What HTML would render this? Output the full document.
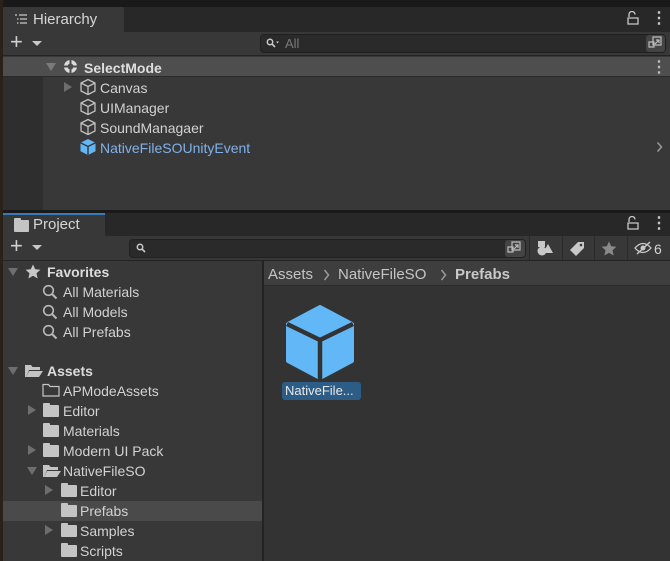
<!DOCTYPE html>
<html><head><meta charset="utf-8"><style>
*{margin:0;padding:0;box-sizing:border-box}
body{width:670px;height:561px;background:#191919;position:relative;overflow:hidden;font-family:"Liberation Sans",sans-serif;font-size:14px;color:#d2d2d2}
.a{position:absolute}
.t{position:absolute;white-space:nowrap;line-height:20px}
.tri{position:absolute;width:0;height:0}
.rt{border-top:5px solid transparent;border-bottom:5px solid transparent;border-left:8px solid #6e6e6e}
.dn{border-left:5px solid transparent;border-right:5px solid transparent;border-top:8px solid #6e6e6e}
.fold{position:absolute;width:16px;height:12px;background:#c4c4c4;border-radius:1px}
.fold:before{content:"";position:absolute;left:0;top:-2px;width:7px;height:3px;background:#c4c4c4;border-radius:1px 1px 0 0}
</style></head><body>
<div class="a" style="left:0;top:0;width:3px;height:561px;background:#2a2218"></div>
<div class="a" style="left:3px;top:7px;width:667px;height:25px;background:#282828"></div>
<div class="a" style="left:3px;top:7px;width:121px;height:25px;background:#383838;border-radius:2px 2px 0 0"></div>
<svg class="a" style="left:14px;top:13px" width="14" height="12"><g stroke="#c4c4c4" stroke-width="1.3"><line x1="1" y1="2" x2="3" y2="2"/><line x1="5" y1="2" x2="13" y2="2"/><line x1="3" y1="6" x2="4.5" y2="6"/><line x1="6" y1="6" x2="13" y2="6"/><line x1="3" y1="10" x2="4.5" y2="10"/><line x1="6" y1="10" x2="13" y2="10"/></g></svg>
<div class="t" style="left:33px;top:10px;font-size:15px;color:#d6d6d6">Hierarchy</div>
<svg class="a" style="left:626px;top:11px" width="14" height="14"><path d="M3 6V3.5a3 3 0 0 1 6 0M2 7h10v6H2z" fill="none" stroke="#c8c8c8" stroke-width="1.3"/></svg>
<div class="t" style="left:651px;top:9px;font-size:16px;font-weight:bold;color:#c8c8c8">⋮</div>
<div class="a" style="left:3px;top:32px;width:667px;height:24px;background:#383838;border-bottom:1px solid #232323"></div>
<div class="t" style="left:10px;top:32px;font-size:22px;color:#d0d0d0">+</div>
<div class="tri dn" style="left:32px;top:41px;border-top-color:#c8c8c8;border-width:5px 5px 0 5px"></div>
<div class="a" style="left:260px;top:34px;width:406px;height:19px;background:#2a2a2a;border:1px solid #202020;border-radius:4px"></div>
<svg class="a" style="left:266px;top:38px" width="14" height="10"><circle cx="4" cy="4" r="2.7" fill="none" stroke="#c8c8c8" stroke-width="1.5"/><path d="M6 6l3 3" stroke="#c8c8c8" stroke-width="1.6"/><path d="M10 3.5h3l-1.5 2z" fill="#c8c8c8"/></svg>
<div class="t" style="left:285px;top:34px;font-size:13px;color:#7a7a7a">All</div>
<div class="a" style="left:646px;top:35px;width:19px;height:17px;background:#444;border-radius:3px"></div>
<svg class="a" style="left:648px;top:36px" width="15" height="15"><path d="M5 1h8v8H5zM1 6h5v5H1z" fill="none" stroke="#bcbcbc" stroke-width="1.2"/><path d="M7 8l4-4M8 4h3v3" fill="none" stroke="#bcbcbc" stroke-width="1.2"/></svg>
<div class="a" style="left:3px;top:56px;width:667px;height:154px;background:#383838"></div>
<div class="a" style="left:3px;top:76px;width:40px;height:134px;background:#2e2e2e"></div>
<div class="a" style="left:3px;top:57px;width:667px;height:20px;background:#4e4e4e;border-bottom:1px solid #2a2a2a"></div>
<div class="tri dn" style="left:46px;top:63px;border-top-color:#7a7a7a"></div>
<svg class="a" style="left:62px;top:58px" width="17" height="17"><circle cx="8.5" cy="8.5" r="6.5" fill="#dcdcdc"/><path d="M8.5 2v13M2 8.5h13" stroke="#4e4e4e" stroke-width="2"/><circle cx="8.5" cy="8.5" r="3" fill="#4e4e4e"/></svg>
<div class="t" style="left:84px;top:58px;font-weight:bold;color:#dedede">SelectMode</div>
<div class="a" style="left:651px;top:57px;font-size:16px;font-weight:bold;color:#bbb">⋮</div>
<div class="tri rt" style="left:64px;top:82px"></div>
<svg class="a" style="left:79px;top:78px" width="18" height="18"><path d="M9 1.5l7 3.5v8l-7 3.5-7-3.5v-8zM2 5l7 3.5 7-3.5M9 8.5v8" fill="none" stroke="#c0c0c0" stroke-width="1.3" stroke-linejoin="round"/></svg>
<div class="t" style="left:100px;top:78px">Canvas</div>
<svg class="a" style="left:79px;top:98px" width="18" height="18"><path d="M9 1.5l7 3.5v8l-7 3.5-7-3.5v-8zM2 5l7 3.5 7-3.5M9 8.5v8" fill="none" stroke="#c0c0c0" stroke-width="1.3" stroke-linejoin="round"/></svg>
<div class="t" style="left:100px;top:98px">UIManager</div>
<svg class="a" style="left:79px;top:118px" width="18" height="18"><path d="M9 1.5l7 3.5v8l-7 3.5-7-3.5v-8zM2 5l7 3.5 7-3.5M9 8.5v8" fill="none" stroke="#c0c0c0" stroke-width="1.3" stroke-linejoin="round"/></svg>
<div class="t" style="left:100px;top:118px">SoundManagaer</div>
<svg class="a" style="left:79px;top:138px" width="18" height="18"><path d="M9 1l7.5 3.7v8.6L9 17l-7.5-3.7V4.7z" fill="#62b8f6"/><path d="M1.5 4.7L9 8.5l7.5-3.8M9 8.5V17" fill="none" stroke="#383838" stroke-width="1.4"/></svg>
<div class="t" style="left:100px;top:138px;color:#7fb2ea">NativeFileSOUnityEvent</div>
<svg class="a" style="left:656px;top:141px" width="8" height="12"><path d="M1.5 1.5l4 4.5-4 4.5" fill="none" stroke="#9a9a9a" stroke-width="1.5"/></svg>
<div class="a" style="left:3px;top:213px;width:667px;height:23px;background:#282828"></div>
<div class="a" style="left:3px;top:213px;width:102px;height:23px;background:#383838;border-top:2px solid #3a79bb"></div>
<div class="fold" style="left:14px;top:220px;width:15px"></div>
<div class="t" style="left:33px;top:215px;font-size:15px;color:#d6d6d6">Project</div>
<svg class="a" style="left:626px;top:216px" width="14" height="14"><path d="M3 6V3.5a3 3 0 0 1 6 0M2 7h10v6H2z" fill="none" stroke="#c8c8c8" stroke-width="1.3"/></svg>
<div class="t" style="left:651px;top:214px;font-size:16px;font-weight:bold;color:#c8c8c8">⋮</div>
<div class="a" style="left:3px;top:236px;width:667px;height:25px;background:#383838;border-bottom:1px solid #232323"></div>
<div class="t" style="left:10px;top:236px;font-size:22px;color:#d0d0d0">+</div>
<div class="tri dn" style="left:32px;top:245px;border-top-color:#c8c8c8;border-width:5px 5px 0 5px"></div>
<div class="a" style="left:129px;top:239px;width:397px;height:19px;background:#2a2a2a;border:1px solid #202020;border-radius:4px"></div>
<svg class="a" style="left:136px;top:243px" width="10" height="10"><circle cx="4" cy="4" r="2.7" fill="none" stroke="#c8c8c8" stroke-width="1.5"/><path d="M6 6l3 3" stroke="#c8c8c8" stroke-width="1.6"/></svg>
<div class="a" style="left:505px;top:240px;width:20px;height:17px;background:#444;border-radius:3px"></div>
<svg class="a" style="left:507px;top:241px" width="15" height="15"><path d="M5 1h8v8H5zM1 6h5v5H1z" fill="none" stroke="#bcbcbc" stroke-width="1.2"/><path d="M7 8l4-4M8 4h3v3" fill="none" stroke="#bcbcbc" stroke-width="1.2"/></svg>
<div class="a" style="left:529px;top:236px;width:1px;height:24px;background:#2a2a2a"></div>
<div class="a" style="left:562px;top:236px;width:1px;height:24px;background:#2a2a2a"></div>
<div class="a" style="left:594px;top:236px;width:1px;height:24px;background:#2a2a2a"></div>
<div class="a" style="left:627px;top:236px;width:1px;height:24px;background:#2a2a2a"></div>
<svg class="a" style="left:537px;top:240px" width="20" height="17"><rect x="1" y="1" width="7" height="6" fill="#c8c8c8"/><circle cx="5" cy="11" r="4.5" fill="#c8c8c8"/><path d="M11 4l5 9h-10z" fill="#c8c8c8"/></svg>
<svg class="a" style="left:569px;top:241px" width="16" height="16"><path d="M9 1h6v6l-8 8-6-6z" fill="#c8c8c8"/><circle cx="12" cy="4" r="1.3" fill="#383838"/></svg>
<svg class="a" style="left:601px;top:241px" width="16" height="15"><path d="M8 0.5l2.2 4.8 5.2.5-3.9 3.5 1.1 5.2L8 11.8l-4.6 2.7 1.1-5.2L.6 5.8l5.2-.5z" fill="#8a8a8a"/></svg>
<svg class="a" style="left:634px;top:241px" width="20" height="14"><path d="M1 7q8-9 16 0q-8 9-16 0z" fill="none" stroke="#c8c8c8" stroke-width="1.3"/><circle cx="9" cy="7" r="2.5" fill="#c8c8c8"/><line x1="3" y1="13" x2="16" y2="1" stroke="#c8c8c8" stroke-width="1.4"/></svg>
<div class="t" style="left:654px;top:239px;font-size:14px">6</div>
<div class="a" style="left:3px;top:261px;width:259px;height:300px;background:#383838"></div>
<div class="a" style="left:262px;top:261px;width:2px;height:300px;background:#232323"></div>
<div class="tri dn" style="left:8px;top:268px"></div>
<svg class="a" style="left:25px;top:264px" width="16" height="15"><path d="M8 0.5l2.2 4.8 5.2.5-3.9 3.5 1.1 5.2L8 11.8l-4.6 2.7 1.1-5.2L.6 5.8l5.2-.5z" fill="#c8c8c8"/></svg>
<div class="t" style="left:47px;top:262px;font-weight:bold;color:#dcdcdc">Favorites</div>
<svg class="a" style="left:42px;top:284px" width="16" height="16"><circle cx="6.5" cy="6.5" r="4.8" fill="none" stroke="#b8b8b8" stroke-width="1.6"/><path d="M10 10l4.5 4.5" stroke="#b8b8b8" stroke-width="2"/></svg>
<div class="t" style="left:63px;top:282px">All Materials</div>
<svg class="a" style="left:42px;top:304px" width="16" height="16"><circle cx="6.5" cy="6.5" r="4.8" fill="none" stroke="#b8b8b8" stroke-width="1.6"/><path d="M10 10l4.5 4.5" stroke="#b8b8b8" stroke-width="2"/></svg>
<div class="t" style="left:63px;top:302px">All Models</div>
<svg class="a" style="left:42px;top:324px" width="16" height="16"><circle cx="6.5" cy="6.5" r="4.8" fill="none" stroke="#b8b8b8" stroke-width="1.6"/><path d="M10 10l4.5 4.5" stroke="#b8b8b8" stroke-width="2"/></svg>
<div class="t" style="left:63px;top:322px">All Prefabs</div>
<div class="tri dn" style="left:8px;top:367px"></div>
<svg class="a" style="left:24px;top:363px" width="20" height="15"><path d="M1 2h6l1.5 2H16v3H5l-3 7H1z" fill="#c4c4c4"/><path d="M5 8h14l-4 6H2z" fill="#c4c4c4"/></svg>
<div class="t" style="left:47px;top:361px;font-weight:bold;color:#dcdcdc">Assets</div>
<svg class="a" style="left:42px;top:383px" width="18" height="14"><path d="M1 1.5h5.5l1.5 2H17V13H1z" fill="none" stroke="#c4c4c4" stroke-width="1.2"/></svg>
<div class="t" style="left:63px;top:381px">APModeAssets</div>
<div class="tri rt" style="left:28px;top:405px"></div>
<div class="fold" style="left:43px;top:405px"></div>
<div class="t" style="left:63px;top:401px">Editor</div>
<div class="fold" style="left:43px;top:425px"></div>
<div class="t" style="left:63px;top:421px">Materials</div>
<div class="tri rt" style="left:28px;top:445px"></div>
<div class="fold" style="left:43px;top:445px"></div>
<div class="t" style="left:63px;top:441px">Modern UI Pack</div>
<div class="tri dn" style="left:27px;top:467px"></div>
<svg class="a" style="left:42px;top:463px" width="20" height="15"><path d="M1 2h6l1.5 2H16v3H5l-3 7H1z" fill="#c4c4c4"/><path d="M5 8h14l-4 6H2z" fill="#c4c4c4"/></svg>
<div class="t" style="left:63px;top:461px">NativeFileSO</div>
<div class="tri rt" style="left:45px;top:485px"></div>
<div class="fold" style="left:61px;top:485px"></div>
<div class="t" style="left:80px;top:481px">Editor</div>
<div class="a" style="left:3px;top:501px;width:259px;height:20px;background:#4a4a4a"></div>
<div class="fold" style="left:61px;top:505px"></div>
<div class="t" style="left:80px;top:501px">Prefabs</div>
<div class="tri rt" style="left:45px;top:525px"></div>
<div class="fold" style="left:61px;top:525px"></div>
<div class="t" style="left:80px;top:521px">Samples</div>
<div class="fold" style="left:61px;top:545px"></div>
<div class="t" style="left:80px;top:541px">Scripts</div>
<div class="a" style="left:264px;top:261px;width:406px;height:300px;background:#333333"></div>
<div class="a" style="left:264px;top:261px;width:406px;height:25px;background:#3e3e3e;border-bottom:1px solid #2a2a2a"></div>
<div class="t" style="left:268px;top:265px;font-size:15px;color:#c4c4c4">Assets</div>
<svg class="a" style="left:323px;top:269px" width="8" height="12"><path d="M1.5 1l4 5-4 5" fill="none" stroke="#9a9a9a" stroke-width="1.5"/></svg>
<div class="t" style="left:338px;top:265px;font-size:15px;color:#c4c4c4">NativeFileSO</div>
<svg class="a" style="left:440px;top:269px" width="8" height="12"><path d="M1.5 1l4 5-4 5" fill="none" stroke="#9a9a9a" stroke-width="1.5"/></svg>
<div class="t" style="left:455px;top:265px;font-size:15px;font-weight:bold;color:#c8c8c8">Prefabs</div>
<svg class="a" style="left:284px;top:304px" width="70" height="76"><path d="M36 3l32 17v37L36 74 4 57V20z" fill="#62b8f6" stroke="#62b8f6" stroke-width="4" stroke-linejoin="round"/><path d="M3 20l33 16 33-16M36 36v40" fill="none" stroke="#333" stroke-width="4.5"/></svg>
<div class="a" style="left:282px;top:382px;width:79px;height:18px;background:#2c5d87;border-radius:3px"></div>
<div class="t" style="left:285px;top:381px;font-size:13px;color:#e8e8e8;line-height:20px">NativeFile...</div>
</body></html>
